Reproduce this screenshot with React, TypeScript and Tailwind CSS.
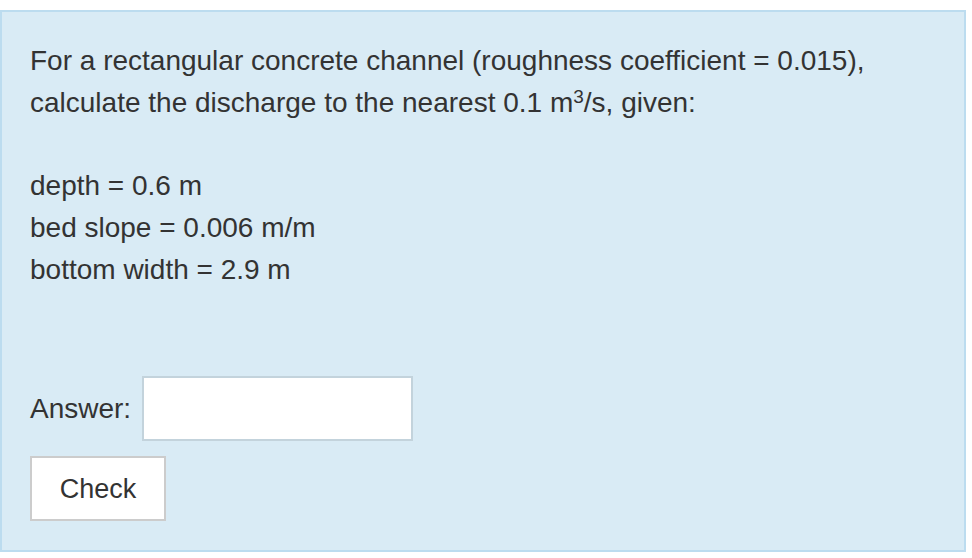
import React, { useState } from 'react';

const App = () => {
  const [answer, setAnswer] = useState("");

  return (
    <div className="bg-white w-[972px] h-[558px] pt-[10px] font-['Liberation_Sans',Arial,sans-serif] text-[#333333]">
      <div className="w-[966px] h-[542px] bg-[#d9ebf5] border-2 border-[#bcdcef] pl-[28px] pt-[28px] text-[28px] leading-[42px]">
        <p>
          For a rectangular concrete channel (roughness coefficient = 0.015),
          <br />
          calculate the discharge to the nearest 0.1 m<sup className="text-[19px]">3</sup>/s, given:
        </p>

        <div className="mt-[41px]">
          <p>depth = 0.6 m</p>
          <p>bed slope = 0.006 m/m</p>
          <p>bottom width = 2.9 m</p>
        </div>

        <div className="mt-[85px] flex items-center gap-[11px]">
          <label htmlFor="answer">Answer:</label>
          <input
            id="answer"
            type="text"
            value={answer}
            onChange={(e) => setAnswer(e.target.value)}
            className="w-[271px] h-[65px] bg-white border-2 border-[#c3d3dc] px-3 outline-none"
          />
        </div>

        <button className="mt-[15px] w-[136px] h-[65px] bg-white border-2 border-[#cccccc] text-[27px]">
          Check
        </button>
      </div>
    </div>
  );
};

export default App;
